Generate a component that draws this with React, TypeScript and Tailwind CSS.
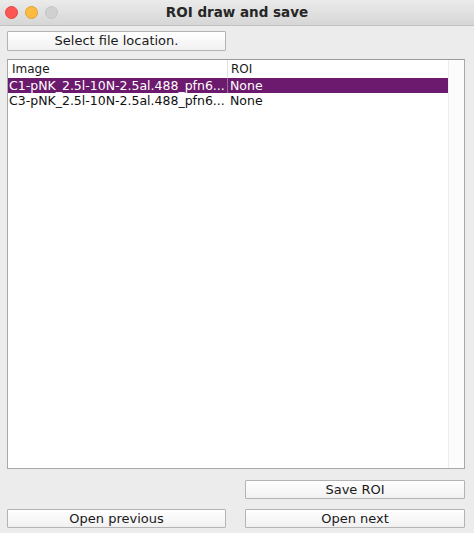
import React from "react";

const font = { fontFamily: '"Lucida Grande", "DejaVu Sans", sans-serif' };

function Btn({ label, className = "" }: { label: string; className?: string }) {
  return (
    <div
      className={`flex items-center justify-center border border-[#b4b4b4] bg-gradient-to-b from-[#ffffff] to-[#f1f1f1] text-[13px] text-[#1a1a1a] rounded-[1px] ${className}`}
    >
      {label}
    </div>
  );
}

export default function App() {
  const rows = [
    { img: "C1-pNK_2.5l-10N-2.5al.488_pfn6...", roi: "None", sel: true },
    { img: "C3-pNK_2.5l-10N-2.5al.488_pfn6...", roi: "None", sel: false },
  ];
  return (
    <div className="w-[474px] h-[533px] bg-[#ececec] flex flex-col overflow-hidden" style={font}>
      {/* title bar */}
      <div className="relative h-[26px] shrink-0 bg-gradient-to-b from-[#ebebeb] to-[#d6d6d6] border-b border-[#c2c2c2] flex items-center justify-center">
        <div className="absolute left-[5px] top-[6px] flex gap-[7px]">
          <div className="w-[13px] h-[13px] rounded-full bg-[#fc5753] border border-[#df4744]" />
          <div className="w-[13px] h-[13px] rounded-full bg-[#fdbc40] border border-[#de9f34]" />
          <div className="w-[13px] h-[13px] rounded-full bg-[#d0d0d0] border border-[#c4c4c4]" />
        </div>
        <span className="text-[13.5px] font-bold text-[#262626]">ROI draw and save</span>
      </div>

      <div className="flex flex-col pl-[7px] pr-[9px] pt-[5px] pb-[4px] flex-1">
        <Btn label="Select file location." className="w-[219px] h-[20px]" />

        {/* table */}
        <div className="mt-[8px] h-[410px] border border-[#a9a9a9] border-t-[#9a9a9a] bg-white flex">
          <div className="flex-1 flex flex-col">
            <div className="h-[18px] flex text-[12px] text-[#1a1a1a] items-center">
              <div className="w-[220px] pl-[4px] h-full flex items-center border-r border-[#e2e2e2]">Image</div>
              <div className="flex-1 pl-[3px] h-full flex items-center">ROI</div>
            </div>
            {rows.map((r, i) => (
              <div
                key={i}
                className={`h-[15px] flex text-[12.5px] items-center leading-[15px] ${
                  r.sel ? "bg-[#6c1a6d] text-white" : "text-[#111]"
                }`}
              >
                <div className={`w-[220px] pl-[1px] h-full whitespace-nowrap overflow-hidden ${r.sel ? "border-r border-[#9a6a9b]" : ""}`}>
                  {r.img}
                </div>
                <div className="flex-1 pl-[2px] h-full">{r.roi}</div>
              </div>
            ))}
          </div>
          <div className="w-[16px] border-l border-[#ececec] bg-[#fcfcfc]" />
        </div>

        <div className="flex justify-end mt-[11px]">
          <Btn label="Save ROI" className="w-[220px] h-[19px]" />
        </div>
        <div className="flex justify-between mt-[10px]">
          <Btn label="Open previous" className="w-[219px] h-[19px]" />
          <Btn label="Open next" className="w-[220px] h-[19px]" />
        </div>
      </div>
    </div>
  );
}
